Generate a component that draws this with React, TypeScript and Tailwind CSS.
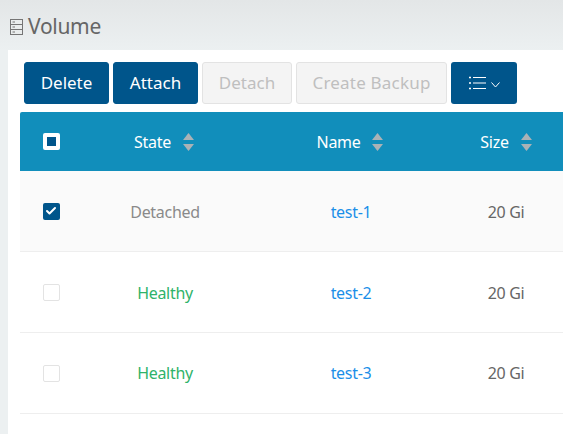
import { Check } from "lucide-react";

const font = "font-['Noto_Sans',sans-serif]";

function SortIcon() {
  return (
    <svg width="11" height="18" viewBox="0 0 11 18" className="ml-[12px] shrink-0" aria-hidden>
      <path d="M5.5 0 L11 7 H0 Z" fill="#aab2b6" />
      <path d="M0 11 H11 L5.5 18 Z" fill="#aab2b6" />
    </svg>
  );
}

function VolumeIcon() {
  return (
    <svg width="13" height="16" viewBox="0 0 13 16" className="mr-[5px] mt-[7px] shrink-0" aria-hidden>
      <rect x="0.5" y="0.5" width="12" height="15" fill="#e9ecec" stroke="#757575" />
      <path d="M1 5.5 H12 M1 10.5 H12" stroke="#757575" />
      <path d="M2.5 3 H5 M2.5 8 H5 M2.5 13 H5" stroke="#757575" />
    </svg>
  );
}

function ActionButton({ label, disabled, width }: { label: string; disabled?: boolean; width: string }) {
  return (
    <button
      className={`h-[42px] shrink-0 rounded-[3px] border text-[17px] ${width} ${
        disabled
          ? "border-[#e3e3e3] bg-[#f4f4f4] text-[#bfbfbf]"
          : "border-[#00558b] bg-[#00558b] text-white"
      }`}
    >
      {label}
    </button>
  );
}

function Box({ state }: { state: "none" | "checked" | "partial" }) {
  if (state === "checked") {
    return (
      <span className="flex h-[17px] w-[17px] items-center justify-center rounded-[2px] bg-[#00558b]">
        <Check size={12} strokeWidth={4} color="#fff" />
      </span>
    );
  }
  if (state === "partial") {
    return (
      <span className="flex h-[17px] w-[17px] items-center justify-center rounded-[2px] bg-white">
        <span className="h-[9px] w-[9px] bg-[#00558b]" />
      </span>
    );
  }
  return <span className="block h-[17px] w-[17px] rounded-[2px] border border-[#e3e3e3] bg-white" />;
}

const rows = [
  { state: "Detached", stateClass: "text-[#8a8a8a]", name: "test-1", size: "20 Gi", selected: true, offset: "pt-[2px]" },
  { state: "Healthy", stateClass: "text-[#2fb36a]", name: "test-2", size: "20 Gi", selected: false, offset: "pt-[2px]" },
  { state: "Healthy", stateClass: "text-[#2fb36a]", name: "test-3", size: "20 Gi", selected: false, offset: "" },
];

export default function App() {
  return (
    <div className={`h-[434px] w-[563px] overflow-hidden bg-[#ecf0f1] ${font}`}>
      <div className="flex h-[50px] items-start bg-gradient-to-b from-[#e3e6e7] to-[#ecf0f1] pl-[10px] pt-[12px]">
        <VolumeIcon />
        <h1 className="text-[21px] leading-[28px] tracking-[-0.3px] text-[#666]">Volume</h1>
      </div>
      <div className="ml-[8px] h-[384px] bg-white pl-[12px] pt-[12px]">
        <div className="ml-[4px] flex gap-[4px]">
          <ActionButton label="Delete" width="w-[85px]" />
          <ActionButton label="Attach" width="w-[85px]" />
          <ActionButton label="Detach" width="w-[90px]" disabled />
          <ActionButton label="Create Backup" width="w-[151px] tracking-[0.2px]" disabled />
          <button className="flex h-[42px] w-[66px] shrink-0 items-center justify-center gap-[5px] rounded-[3px] bg-[#00558b]">
            <svg width="17" height="14" viewBox="0 0 17 14" aria-hidden>
              <path d="M4 1.5 H17 M4 7 H17 M4 12.5 H17" stroke="#fff" strokeWidth="1" />
              <path d="M0 1.5 H2 M0 7 H2 M0 12.5 H2" stroke="#fff" strokeWidth="1.6" />
            </svg>
            <svg width="9" height="6" viewBox="0 0 9 6" className="mt-[3px]" aria-hidden>
              <path d="M0.5 0.5 L4.5 5 L8.5 0.5" stroke="#fff" fill="none" />
            </svg>
          </button>
        </div>
        <div className="mt-[8px] w-[560px]">
          <div className="grid h-[59px] grid-cols-[62px_166px_206px_104px] items-center rounded-t-[2px] bg-[#118ebb] text-[16px] tracking-[-0.3px] text-white">
            <div className="flex justify-center"><Box state="partial" /></div>
            <div className="flex items-center justify-center pr-[2px]">State<SortIcon /></div>
            <div className="flex items-center justify-center pr-[2px]">Name<SortIcon /></div>
            <div className="flex items-center justify-center">Size<SortIcon /></div>
          </div>
          {rows.map((row) => (
            <div
              key={row.name}
              className={`grid h-[81px] grid-cols-[62px_166px_206px_104px] items-center border-b border-[#eee] text-[16px] tracking-[-0.3px] ${
                row.selected ? "bg-[#fafafa]" : "bg-white"
              }`}
            >
              <div className="flex justify-center"><Box state={row.selected ? "checked" : "none"} /></div>
              <div className={`text-center ${row.stateClass} ${row.offset}`}>{row.state}</div>
              <div className={`text-center text-[#1a8fe8] ${row.offset}`}>{row.name}</div>
              <div className={`text-center text-[#666] ${row.offset}`}>{row.size}</div>
            </div>
          ))}
        </div>
      </div>
    </div>
  );
}
